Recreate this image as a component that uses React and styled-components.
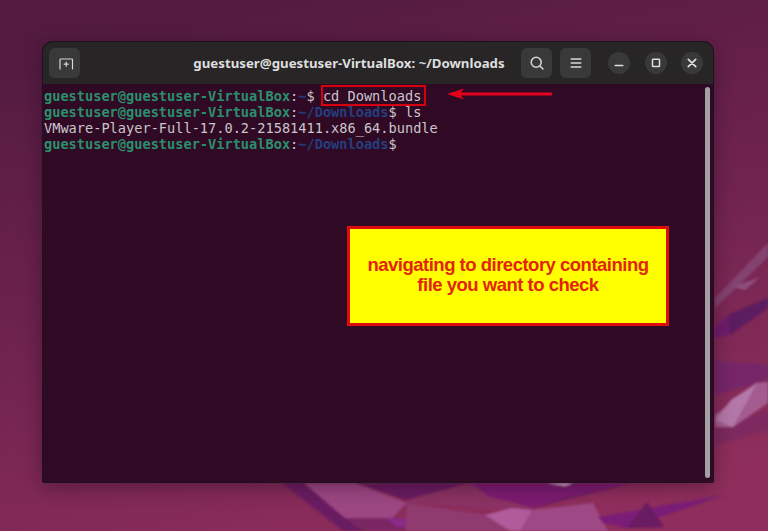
import React from "react";
import styled, { createGlobalStyle } from "styled-components";

const Global = createGlobalStyle`
  html, body { margin: 0; padding: 0; width: 768px; height: 531px; overflow: hidden; background: #6b2350; }
  #root { width: 768px; height: 531px; }
`;

const Desktop = styled.div`
  position: relative;
  width: 768px;
  height: 531px;
  box-sizing: border-box;
  padding: 42px 55px 49px 43px;
  overflow: hidden;
`;

const Wallpaper = styled.svg`
  position: absolute;
  inset: 0;
  width: 768px;
  height: 531px;
`;

const Window = styled.main`
  position: relative;
  height: 440px;
  display: flex;
  flex-direction: column;
  border-radius: 10px 10px 1px 1px;
  overflow: hidden;
  background: #300a24;
  box-shadow: 0 0 0 1px #1d1220, 0 4px 20px rgba(20, 0, 20, 0.4);
`;

const Header = styled.header`
  flex: 0 0 42px;
  height: 42px;
  display: flex;
  align-items: center;
  padding: 0 10px 0 6px;
  background: #272525;
  color: #dcdcdc;
`;

const HeadButton = styled.button`
  width: 31px;
  height: 30px;
  padding: 0;
  border: 0;
  margin-left: ${(p) => p.$gap || 0}px;
  border-radius: 6px;
  background: #3a3939;
  color: #d8d8d8;
  display: flex;
  align-items: center;
  justify-content: center;
`;

const Title = styled.h1`
  flex: 1;
  margin: 0;
  padding-left: 97px;
  text-align: center;
  font: 700 13.25px "Noto Sans", "Open Sans", sans-serif;
  color: #dedede;
  white-space: nowrap;
`;

const Controls = styled.div`
  display: flex;
  gap: 14.5px;
  margin-left: 17px;
`;

const CircleButton = styled.button`
  width: 22px;
  height: 22px;
  padding: 0;
  border: 0;
  border-radius: 50%;
  background: #3a3939;
  color: #e0e0e0;
  display: flex;
  align-items: center;
  justify-content: center;
`;

const Body = styled.section`
  position: relative;
  flex: 1;
  padding: 4px 1px;
  background: #300a24;
`;

const Line = styled.div`
  height: 16px;
  font: 13.64px/16px "DejaVu Sans Mono", monospace;
  color: #cbc5ca;
  white-space: pre;
`;

const Host = styled.span`
  font-weight: 700;
  color: #2b8f6c;
`;

const Path = styled.span`
  font-weight: 700;
  color: #233f7e;
`;

const Scrollbar = styled.div`
  position: absolute;
  top: 3px;
  right: 3px;
  bottom: 4px;
  width: 5px;
  border-radius: 3px;
  background: #a49ea5;
`;

const CommandMark = styled.div`
  position: absolute;
  left: 278px;
  top: 1px;
  width: 105px;
  height: 21px;
  box-sizing: border-box;
  border: 2.5px solid #d8000f;
`;

const Arrow = styled.svg`
  position: absolute;
  left: 404px;
  top: 2px;
  width: 105px;
  height: 16px;
`;

const Callout = styled.div`
  position: absolute;
  left: 304px;
  top: 142px;
  width: 322px;
  height: 100px;
  box-sizing: border-box;
  padding-bottom: 2px;
  border: 3px solid #dd0b0b;
  background: #ffff00;
  color: #e2250a;
  display: flex;
  align-items: center;
  justify-content: center;
  text-align: center;
  font: 700 18.5px/20px "Liberation Sans", Arial, sans-serif;
  letter-spacing: -0.5px;
`;

const icon = { fill: "none", stroke: "currentColor", strokeWidth: 1.5, strokeLinecap: "round", strokeLinejoin: "round" };

export default function App() {
  return (
    <>
      <Global />
      <Desktop>
        <Wallpaper viewBox="0 0 768 531" aria-hidden="true">
          <defs>
            <linearGradient id="bg" x1="0.3" y1="0" x2="0.65" y2="1">
              <stop offset="0" stopColor="#531b40" />
              <stop offset="0.5" stopColor="#6f234f" />
              <stop offset="1" stopColor="#8f2e5c" />
            </linearGradient>
            <filter id="soft"><feGaussianBlur stdDeviation="0.8" /></filter>
          </defs>
          <rect width="768" height="531" fill="url(#bg)" />
          <g filter="url(#soft)">
            <polygon points="715,298 768,243 768,257 715,308" fill="#84426f" />
            <polygon points="733,287 760,277 745,290" fill="#8e4f80" />
            <polygon points="715,327 728,315 730,335 715,338" fill="#6d1f6b" />
            <polygon points="728,315 768,298 768,308 730,335" fill="#5c1a60" />
            <polygon points="715,360 768,365 768,380 715,395" fill="#762668" />
            <polygon points="715,430 768,410 768,430 715,445" fill="#7d2a60" />
            <polygon points="715,415 757,383 768,382 768,403 733,427 715,427" fill="#a45b8f" />
            <polygon points="715,420 731,400 757,383 733,427" fill="#b478a8" />

            <polygon points="282,483 304,483 363,531 343,531" fill="#6a1f62" />
            <polygon points="304,483 355,483 407,503 392,518 345,518" fill="#9c4682" />
            <polygon points="345,518 392,518 420,520 405,531 363,531" fill="#7a2662" />
            <polygon points="385,518 421,520 407,527 397,527" fill="#8a2a8a" />
            <polygon points="355,483 470,483 407,500" fill="#6b1a60" />
            <polygon points="407,503 505,510 535,508 600,483 470,483 407,500" fill="#8b3263" />
            <polygon points="470,483 632,483 534,508 490,497" fill="#7d1f71" />
            <polygon points="555,500 632,483 534,508" fill="#6d2060" />
            <polygon points="407,503 485,515 510,531 405,531" fill="#8f3a70" />
            <polygon points="532,510 593,503 608,531 520,531" fill="#9e4a85" />
            <polygon points="485,515 512,508 532,510 520,531 510,531" fill="#b05c9b" />
            <polygon points="547,483 573,483 565,486" fill="#d8a8d0" />
            <polygon points="598,517 725,495 657,518 662,527 627,528 603,523" fill="#7a1f78" />
            <polygon points="647,502 664,527 627,528" fill="#691a62" />
          </g>
        </Wallpaper>
        <Window>
          <Header>
            <HeadButton aria-label="New tab">
              <svg width="16" height="16" viewBox="0 0 16 16" style={{ ...icon, strokeWidth: 1.2, overflow: "visible" }}>
                <path d="M3 14V4.7q0-.7.7-.7h11.1q.7 0 .7.7V14" />
                <path d="M9.2 7.2v4M7.2 9.2h4" />
              </svg>
            </HeadButton>
            <Title>guestuser@guestuser-VirtualBox: ~/Downloads</Title>
            <HeadButton aria-label="Search">
              <svg width="16" height="16" viewBox="0 0 16 16" style={icon}>
                <circle cx="7.2" cy="7.2" r="5" />
                <path d="M11 11l3 3" />
              </svg>
            </HeadButton>
            <HeadButton $gap={8} aria-label="Menu">
              <svg width="16" height="16" viewBox="0 0 16 16" style={icon}>
                <path d="M3.2 3.9h9.6M3.2 8h9.6M3.2 12.1h9.6" />
              </svg>
            </HeadButton>
            <Controls>
              <CircleButton aria-label="Minimize">
                <svg width="12" height="12" viewBox="0 0 12 12" style={icon}>
                  <path d="M2.2 8.6h7.6" />
                </svg>
              </CircleButton>
              <CircleButton aria-label="Maximize">
                <svg width="12" height="12" viewBox="0 0 12 12" style={icon}>
                  <rect x="2.5" y="2.3" width="7" height="7.2" rx="0.6" />
                </svg>
              </CircleButton>
              <CircleButton aria-label="Close">
                <svg width="12" height="12" viewBox="0 0 12 12" style={{ ...icon, strokeWidth: 1.7 }}>
                  <path d="M2.3 2.3l7.4 7.4M9.7 2.3l-7.4 7.4" />
                </svg>
              </CircleButton>
            </Controls>
          </Header>
          <Body>
            <Line><Host>guestuser@guestuser-VirtualBox</Host>:<Path>~</Path>$ cd Downloads</Line>
            <Line><Host>guestuser@guestuser-VirtualBox</Host>:<Path>~/Downloads</Path>$ ls</Line>
            <Line>VMware-Player-Full-17.0.2-21581411.x86_64.bundle</Line>
            <Line><Host>guestuser@guestuser-VirtualBox</Host>:<Path>~/Downloads</Path>$</Line>
            <Scrollbar />
            <CommandMark />
            <Arrow viewBox="0 0 105 16" aria-hidden="true">
              <path d="M0 8 L17 2.5 L14 6.5 L105 6.5 L105 9.5 L14 9.5 L17 13.5 Z" fill="#e3001b" />
            </Arrow>
            <Callout>navigating to directory containing<br />file you want to check</Callout>
          </Body>
        </Window>
      </Desktop>
    </>
  );
}
